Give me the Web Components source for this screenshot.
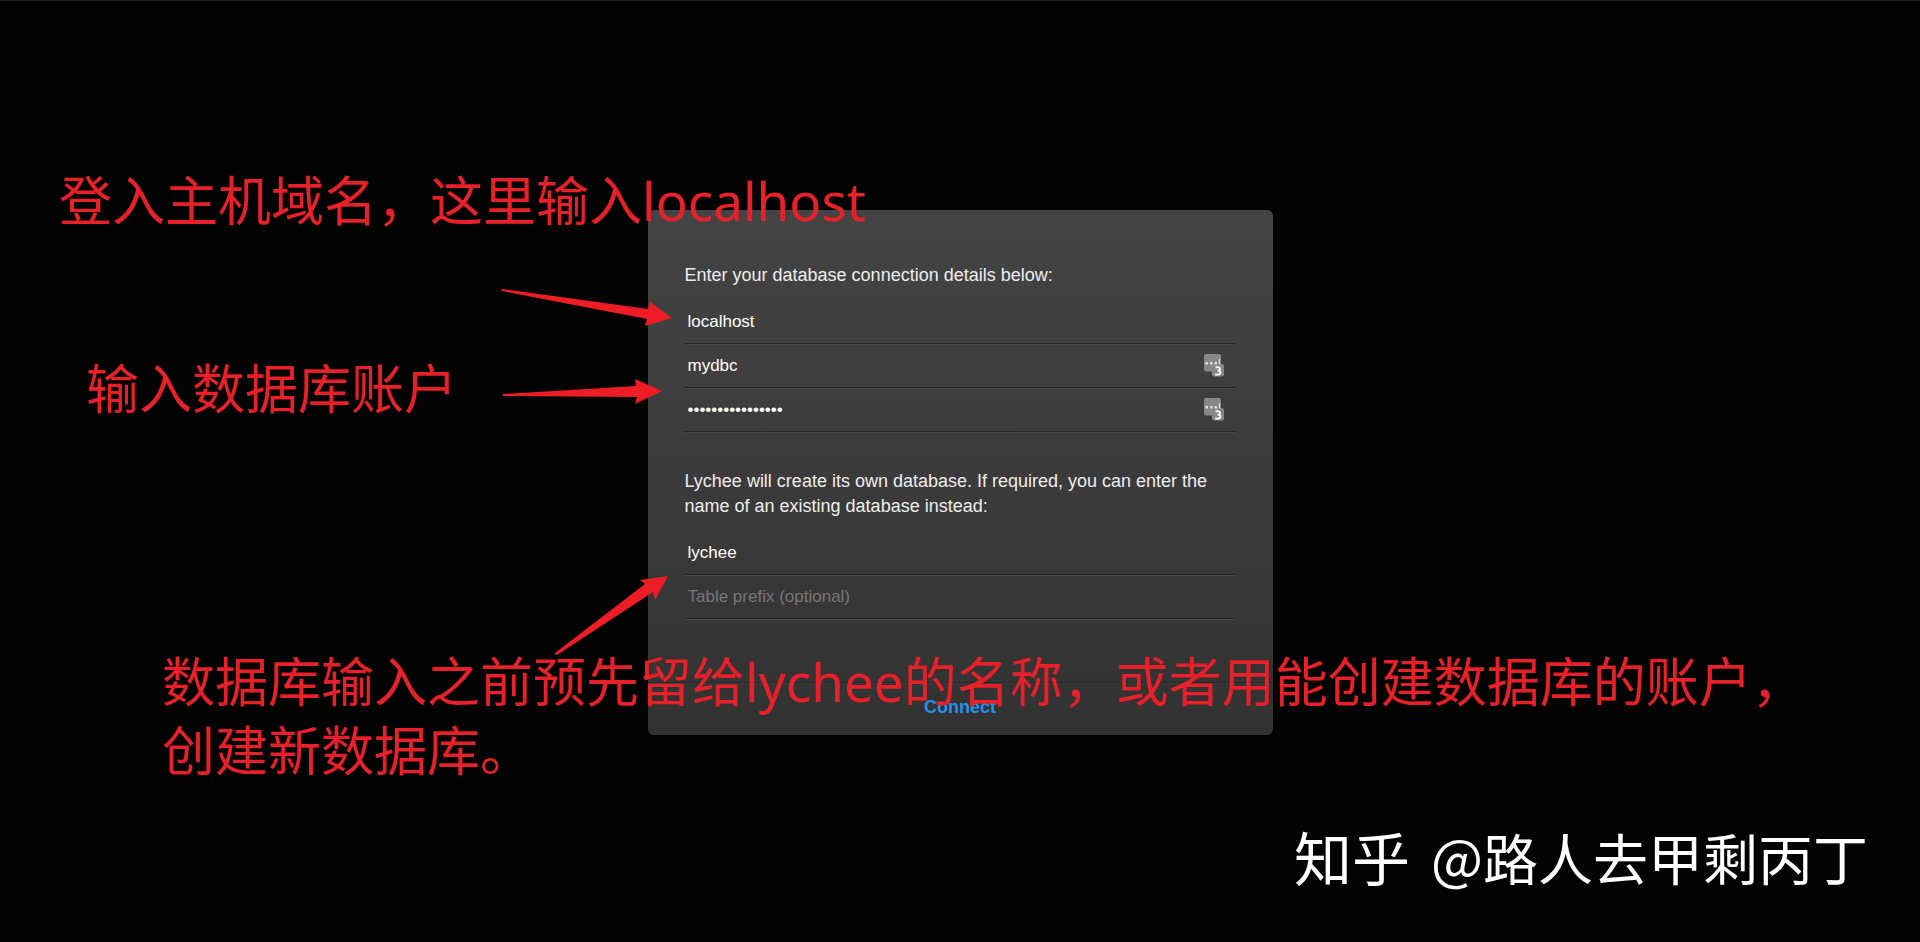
<!DOCTYPE html>
<html lang="zh-CN">
<head>
<meta charset="utf-8">
<title>Lychee</title>
<style>
html,body{margin:0;min-height:100%;background:#030303}
</style>
</head>
<body>
<lychee-page>
  <connect-dialog>
    <dialog-text>Enter your database connection details below:</dialog-text>
    <field-group>
      <text-field label="Host" value="localhost"></text-field>
      <text-field label="Username" value="mydbc" manager></text-field>
      <text-field label="Password" type="password" value="databasepassword" manager></text-field>
    </field-group>
    <dialog-text>Lychee will create its own database. If required, you can enter the name of an existing database instead:</dialog-text>
    <field-group>
      <text-field label="Database" value="lychee"></text-field>
      <text-field label="Table prefix" placeholder="Table prefix (optional)"></text-field>
    </field-group>
    <span slot="action">Connect</span>
  </connect-dialog>

  <note-arrow slot="notes" shape="host" style="--x:-460px;--y:-184px"></note-arrow>
  <note-arrow slot="notes" shape="account" style="--x:-460px;--y:-94px"></note-arrow>
  <note-arrow slot="notes" shape="database" style="--x:-407px;--y:102px"></note-arrow>
  <note-text slot="notes" style="--x:-901px;--y:-306px">登入主机域名，这里输入localhost</note-text>
  <note-text slot="notes" style="--x:-874px;--y:-118px">输入数据库账户</note-text>
  <note-text slot="notes" style="--x:-798px;--y:175px">数据库输入之前预先留给lychee的名称，或者用能创建数据库的账户，<br>创建新数据库。</note-text>
  <author-mark slot="mark"><span slot="brand">知乎</span>@路人去甲剩丙丁</author-mark>
</lychee-page>

<script>
class ShadowElement extends HTMLElement {
  constructor() {
    super();
    this.attachShadow({mode: 'open'});
  }
  connectedCallback() {
    this.shadowRoot.innerHTML = this.render();
  }
}

customElements.define('lychee-page', class extends ShadowElement {
  render() {
    return `<style>
      :host{display:block;position:relative;min-height:100vh;box-sizing:border-box;border-top:1px solid #222;
        background:#030303;overflow:hidden;font-family:"Liberation Sans",Arial,sans-serif}
      main{display:grid;place-items:center;min-height:calc(100vh - 1px);box-sizing:border-box;padding-top:2px}
    </style>
    <main><slot></slot></main>
    <slot name="notes"></slot>
    <slot name="mark"></slot>`;
  }
});

customElements.define('connect-dialog', class extends ShadowElement {
  render() {
    return `<style>
      :host{display:block;width:625px;max-width:100%;border-radius:6px;background:linear-gradient(#444,#323232);overflow:hidden}
      form{margin:0}
      .body{padding:53px 38px 63px 37px}
      button{display:block;width:100%;height:53px;border:0;border-top:1px solid #292929;box-shadow:inset 0 1px 0 #3a3a3a;
        background:none;padding:0 0 4px;color:#2293ec;font:bold 18px/25px "Liberation Sans",Arial,sans-serif}
    </style>
    <form><div class="body"><slot></slot></div><button type="button"><slot name="action"></slot></button></form>`;
  }
});

customElements.define('dialog-text', class extends ShadowElement {
  render() {
    return `<style>
      :host{display:block;color:#eee;font-size:18px;line-height:25px}
      p{margin:0}
    </style><p><slot></slot></p>`;
  }
});

customElements.define('field-group', class extends ShadowElement {
  render() {
    return `<style>
      :host{display:flex;flex-direction:column;margin:12px 0 37px}
      :host(:last-of-type){margin-bottom:0}
    </style><slot></slot>`;
  }
});

customElements.define('text-field', class extends ShadowElement {
  render() {
    const a = n => this.getAttribute(n) || '';
    const icon = this.hasAttribute('manager') ? `<svg width="20" height="23" viewBox="0 0 20 23" aria-hidden="true">
      <path d="M2 0H15Q17 0 17 2V10H18Q20 10 20 12V20.500Q20 22.500 18 22.500H10Q8 22.500 8 20.500V17.500H2Q0 17.500 0 15.500V2Q0 0 2 0Z" fill="#878787"/>
      <path d="M1.500 8h2.500v2.500h-2.500zM6 8h2.500v2.500H6zM10.500 8h2.500v2.500h-2.500zM14.800 5h1.200v5.500H14.800z" fill="#ddd"/>
      <path d="M11.500 13.500Q16 12.500 16 15Q16 16.700 13.500 16.700Q16.500 16.800 16.500 18.700Q16.500 21.300 11.200 20.300" fill="none" stroke="#fff" stroke-width="1.800"/>
    </svg>` : '';
    return `<style>
      :host{display:block}
      label{display:flex;align-items:center;height:43px;padding-right:11px;border-bottom:1px solid #242424;box-shadow:0 1px 0 #484848}
      input{flex:1;min-width:0;height:21px;margin:0;padding:0 3px;border:0;outline:0;background:none;color:#fff;
        font:17px/21px "Liberation Sans",Arial,sans-serif}
      input::placeholder{color:#777;opacity:1}
    </style>
    <label><input type="${a('type') || 'text'}" aria-label="${a('label')}" value="${a('value')}" placeholder="${a('placeholder')}">${icon}</label>`;
  }
});

/* Annotations sit over the page, measured from its centre. */
customElements.define('note-text', class extends ShadowElement {
  render() {
    return `<style>
      :host{position:absolute;left:calc(50% + var(--x));top:calc(50% + var(--y));white-space:nowrap;color:#e8202a;
        font:400 53px/69px "Noto Sans","Noto Sans CJK SC",sans-serif;pointer-events:none}
      p{margin:0}
    </style><p><slot></slot></p>`;
  }
});

const arrows = {
  host: [176, 44, 'M2 1L148 21L150 14L172 30L145 38L147 31L2 3Q1 2 2 1Z'],
  account: [166, 30, 'M3 16L136 8L135 1L162 13L135 26L137 19L3 18Q2 17 3 16Z'],
  database: [118, 82, 'M2 79L92 10L87 6L115 2L102 26L100 18L4 81Q2 81 2 79Z']
};
customElements.define('note-arrow', class extends ShadowElement {
  render() {
    const [w, h, d] = arrows[this.getAttribute('shape')];
    return `<style>
      :host{position:absolute;left:calc(50% + var(--x));top:calc(50% + var(--y));pointer-events:none}
      svg{display:block}
    </style><svg width="${w}" height="${h}" viewBox="0 0 ${w} ${h}" aria-hidden="true"><path d="${d}" fill="#ee1c24"/></svg>`;
  }
});

customElements.define('author-mark', class extends ShadowElement {
  render() {
    return `<style>
      :host{position:absolute;right:52px;bottom:46px;display:flex;gap:21px;align-items:center;white-space:nowrap;color:#fff;
        font:400 55px/80px "Noto Sans CJK SC",sans-serif}
      .brand{font-size:58px}
    </style><span class="brand"><slot name="brand"></slot></span><span><slot></slot></span>`;
  }
});
</script>
</body>
</html>
